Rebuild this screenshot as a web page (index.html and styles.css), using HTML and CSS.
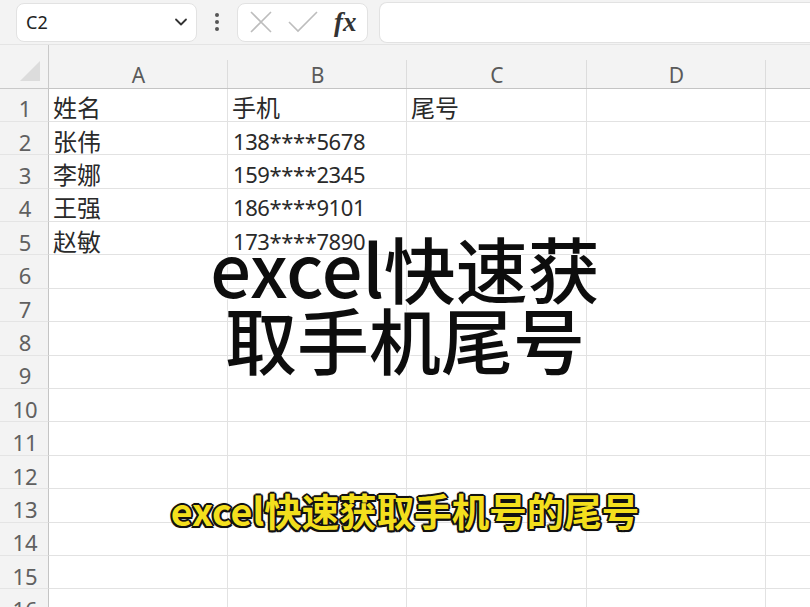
FILE: index.html
```html
<!DOCTYPE html>
<html lang="zh-CN">
<head>
<meta charset="utf-8">
<title>excel快速获取手机尾号</title>
<link rel="stylesheet" href="styles.css">
</head>
<body>
<div class="app">
  <div class="toolbar">
    <div class="namebox">
      <span class="ref">C2</span>
      <svg class="chev" width="14" height="10" viewBox="0 0 14 10"><path d="M2 2.5 L7 7.5 L12 2.5" fill="none" stroke="#333" stroke-width="1.8" stroke-linecap="round" stroke-linejoin="round"/></svg>
    </div>
    <div class="dots"><i></i><i></i><i></i></div>
    <div class="fbtns">
      <svg width="24" height="22" viewBox="0 0 24 22"><path d="M2 1 L22 21 M22 1 L2 21" stroke="#bdbdbd" stroke-width="1.6" fill="none"/></svg>
      <svg width="30" height="22" viewBox="0 0 30 22"><path d="M1 11 L10 20 L29 1" stroke="#bdbdbd" stroke-width="1.6" fill="none"/></svg>
      <span class="fx">fx</span>
    </div>
    <div class="finput"></div>
  </div>

  <div class="sheet">
    <div class="corner"><svg width="22" height="22" viewBox="0 0 22 22"><path d="M21 1 L21 21 L1 21 Z" fill="#dcdcdc"/></svg></div>
    <div class="colh">A</div>
    <div class="colh">B</div>
    <div class="colh">C</div>
    <div class="colh">D</div>
    <div class="colh"></div>

    <div class="rowh">1</div><div class="cell">姓名</div><div class="cell">手机</div><div class="cell">尾号</div><div class="cell"></div><div class="cell"></div>
    <div class="rowh">2</div><div class="cell">张伟</div><div class="cell num">138****5678</div><div class="cell"></div><div class="cell"></div><div class="cell"></div>
    <div class="rowh">3</div><div class="cell">李娜</div><div class="cell num">159****2345</div><div class="cell"></div><div class="cell"></div><div class="cell"></div>
    <div class="rowh">4</div><div class="cell">王强</div><div class="cell num">186****9101</div><div class="cell"></div><div class="cell"></div><div class="cell"></div>
    <div class="rowh">5</div><div class="cell">赵敏</div><div class="cell num">173****7890</div><div class="cell"></div><div class="cell"></div><div class="cell"></div>
    <div class="rowh">6</div><div class="cell"></div><div class="cell"></div><div class="cell"></div><div class="cell"></div><div class="cell"></div>
    <div class="rowh">7</div><div class="cell"></div><div class="cell"></div><div class="cell"></div><div class="cell"></div><div class="cell"></div>
    <div class="rowh">8</div><div class="cell"></div><div class="cell"></div><div class="cell"></div><div class="cell"></div><div class="cell"></div>
    <div class="rowh">9</div><div class="cell"></div><div class="cell"></div><div class="cell"></div><div class="cell"></div><div class="cell"></div>
    <div class="rowh">10</div><div class="cell"></div><div class="cell"></div><div class="cell"></div><div class="cell"></div><div class="cell"></div>
    <div class="rowh">11</div><div class="cell"></div><div class="cell"></div><div class="cell"></div><div class="cell"></div><div class="cell"></div>
    <div class="rowh">12</div><div class="cell"></div><div class="cell"></div><div class="cell"></div><div class="cell"></div><div class="cell"></div>
    <div class="rowh">13</div><div class="cell"></div><div class="cell"></div><div class="cell"></div><div class="cell"></div><div class="cell"></div>
    <div class="rowh">14</div><div class="cell"></div><div class="cell"></div><div class="cell"></div><div class="cell"></div><div class="cell"></div>
    <div class="rowh">15</div><div class="cell"></div><div class="cell"></div><div class="cell"></div><div class="cell"></div><div class="cell"></div>
    <div class="rowh">16</div><div class="cell"></div><div class="cell"></div><div class="cell"></div><div class="cell"></div><div class="cell"></div>
  </div>

  <div class="title">excel快速获<br>取手机尾号</div>
  <div class="subtitle">excel快速获取手机号的尾号</div>
</div>
</body>
</html>
```

FILE: styles.css
```css
html, body {
  margin: 0;
  padding: 0;
}
body {
  width: 810px;
  height: 607px;
  overflow: hidden;
  background: #f3f3f3;
  font-family: "Noto Sans CJK SC", "Noto Sans", sans-serif;
}
.app {
  position: relative;
  width: 810px;
  height: 607px;
  overflow: hidden;
}
.toolbar {
  height: 45px;
  display: flex;
  align-items: center;
  padding-left: 16px;
  box-sizing: border-box;
  border-bottom: 1px solid #e4e4e4;
}
.namebox {
  width: 181px;
  height: 39px;
  box-sizing: border-box;
  background: #fff;
  border: 1px solid #e2e2e2;
  border-radius: 8px;
  display: flex;
  align-items: center;
  justify-content: space-between;
  padding: 0 8px 0 9px;
}
.ref {
  font-family: "Noto Sans", sans-serif;
  font-size: 18px;
  color: #222;
}
.dots {
  width: 40px;
  display: flex;
  flex-direction: column;
  align-items: center;
  gap: 3px;
}
.dots i {
  width: 4px;
  height: 4px;
  border-radius: 2px;
  background: #555;
}
.fbtns {
  width: 131px;
  height: 39px;
  box-sizing: border-box;
  background: #fff;
  border: 1px solid #e2e2e2;
  border-radius: 8px;
  display: flex;
  align-items: center;
  padding-left: 11px;
  gap: 15px;
}
.fx {
  font-family: "Liberation Serif", "DejaVu Serif", serif;
  font-style: italic;
  font-weight: bold;
  font-size: 27px;
  color: #333;
  margin-left: 1px;
  line-height: 1;
}
.finput {
  margin-left: 11px;
  flex: 1;
  height: 39px;
  background: #fff;
  border: 1px solid #e2e2e2;
  border-right: none;
  border-radius: 8px 0 0 8px;
}
.sheet {
  display: grid;
  grid-template-columns: 49px 179px 179px 180px 179px 179px;
  grid-template-rows: 43.5px repeat(16, 33.4px);
}
.corner {
  display: flex;
  align-items: flex-end;
  justify-content: flex-end;
  padding: 0 7px 6px 0;
  border-right: 1px solid #c9c9c9;
  border-bottom: 1px solid #c9c9c9;
}
.colh {
  display: flex;
  align-items: center;
  justify-content: center;
  padding-top: 17px;
  box-sizing: border-box;
  font-family: "Noto Sans", sans-serif;
  font-size: 21px;
  color: #5a5a5a;
  border-bottom: 1px solid #c4c4c4;
  background: linear-gradient(#dcdcdc, #dcdcdc) right bottom / 1px 28px no-repeat;
}
.rowh {
  display: flex;
  align-items: center;
  justify-content: center;
  padding: 7px 0 0 2px;
  box-sizing: border-box;
  font-family: "Noto Sans", sans-serif;
  font-size: 22px;
  color: #606060;
  border-right: 1px solid #c4c4c4;
  border-bottom: 1px solid #e4e4e4;
}
.cell {
  background: #fff;
  border-right: 1px solid #e2e2e2;
  border-bottom: 1px solid #e2e2e2;
  display: flex;
  align-items: center;
  padding: 4px 0 0 4px;
  box-sizing: border-box;
  font-size: 24px;
  color: #2a2a2a;
  white-space: nowrap;
  overflow: visible;
}
.cell.num {
  font-family: "Noto Sans", sans-serif;
  font-size: 22px;
  padding-left: 5px;
  padding-top: 5px;
  letter-spacing: -0.4px;
}
.title {
  position: absolute;
  left: 0;
  right: 0;
  top: 231px;
  text-align: center;
  font-family: "Noto Sans CJK SC", sans-serif;
  font-weight: 500;
  font-size: 72px;
  line-height: 71px;
  color: #0d0d0d;
  text-shadow: 0 0 3px #fff, 0 0 3px #fff;
}
.subtitle {
  position: absolute;
  left: 0;
  right: 0;
  top: 485px;
  text-align: center;
  font-family: "Noto Sans CJK SC", sans-serif;
  font-weight: 700;
  font-size: 37.5px;
  line-height: 50px;
  color: #f3df1d;
  text-shadow:
    2px 0 0 #111, -2px 0 0 #111, 0 2px 0 #111, 0 -2px 0 #111,
    1.5px 1.5px 0 #111, -1.5px 1.5px 0 #111, 1.5px -1.5px 0 #111, -1.5px -1.5px 0 #111,
    0 0 3px #000;
}
```
